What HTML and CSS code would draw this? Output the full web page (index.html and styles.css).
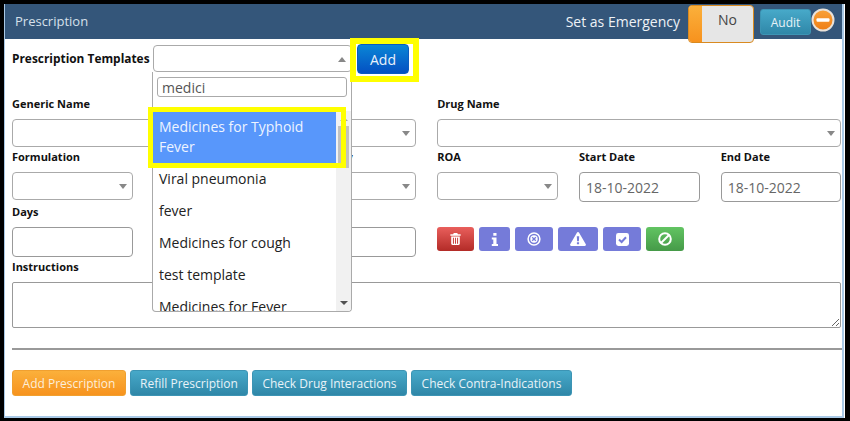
FILE: index.html
```html
<!DOCTYPE html>
<html lang="en">
<head>
<meta charset="utf-8">
<title>Prescription</title>
<link rel="stylesheet" href="styles.css">
</head>
<body>
<div class="frame">
  <div class="panel">
    <header class="head">
      <h1 class="title">Prescription</h1>
      <span class="emergency">Set as Emergency</span>
      <div class="toggle"><span class="toggle-knob"></span><span class="toggle-text">No</span></div>
      <button class="btn btn-info btn-audit">Audit</button>
      <svg class="minus" width="24" height="24" viewBox="0 0 24 24">
        <defs><linearGradient id="mg" x1="0" y1="0" x2="0" y2="1"><stop offset="0" stop-color="#f9a23a"/><stop offset="1" stop-color="#ee7d14"/></linearGradient></defs>
        <circle cx="12" cy="12" r="10.5" fill="url(#mg)" stroke="#e9e2da" stroke-width="2"/>
        <rect x="5.5" y="10.2" width="13" height="3.6" rx="1" fill="#fff"/>
      </svg>
    </header>
    <div class="form">
      <div class="template-row">
        <label class="template-label">Prescription Templates</label>
        <div class="select template-select"><i class="caret caret-up"></i></div>
        <button class="btn btn-add">Add</button>
      </div>
      <div class="fields">
        <div class="field span3"><label>Generic Name</label><div class="select"><i class="caret"></i></div></div>
        <div class="field span3"><label>Drug Name</label><div class="select"><i class="caret"></i></div></div>
        <div class="field"><label>Formulation</label><div class="select"><i class="caret"></i></div></div>
        <div class="field"><label></label><div class="select"><i class="caret"></i></div></div>
        <div class="field"><label>Frequency</label><div class="select"><i class="caret"></i></div></div>
        <div class="field"><label>ROA</label><div class="select"><i class="caret"></i></div></div>
        <div class="field"><label>Start Date</label><input class="input" type="text" value="18-10-2022"></div>
        <div class="field"><label>End Date</label><input class="input" type="text" value="18-10-2022"></div>
        <div class="field"><label>Days</label><input class="input" type="text"></div>
        <div class="field span2"><label></label><input class="input" type="text"></div>
        <div class="field span3 icon-field">
          <button class="icon-btn red w37"><svg width="11" height="12" viewBox="0 0 12 14"><path fill="#fff" fill-rule="evenodd" d="M4 0h4l.8 1.6H12v1.6H0V1.6h3.200zM1 4h10v8.600c0 .8-.6 1.400-1.400 1.400H2.400C1.600 14 1 13.400 1 12.600zM3 5.500v7h1.200v-7zM5.400 5.500v7h1.200v-7zM7.800 5.500v7H9v-7z"/></svg></button>
          <button class="icon-btn purple w31"><svg width="8" height="13" viewBox="0 0 8 13"><path fill="#fff" d="M2.300 0h3.200v2.800H2.300zM.8 4.400h4.700v6.600H7V13H.8v-2h1.500V6.400H.8z"/></svg></button>
          <button class="icon-btn purple w38"><svg width="14" height="14" viewBox="0 0 14 14"><circle cx="7" cy="7" r="5.900" fill="none" stroke="#fff" stroke-width="1.500"/><circle cx="7" cy="7" r="3.700" fill="#fff"/><path d="M5.200 5.200l3.600 3.600m0-3.600l-3.600 3.600" stroke="#757bd9" stroke-width="1.300"/></svg></button>
          <button class="icon-btn purple w40"><svg width="16" height="14" viewBox="0 0 16 14"><path fill="#fff" fill-rule="evenodd" d="M8 0c.5 0 .9.300 1.100.7l6.700 11.600c.4.800-.1 1.700-1 1.700H1.200c-.9 0-1.400-.9-1-1.700L6.900.7C7.100.3 7.500 0 8 0zM6.800 4.300l.3 5h1.800l.3-5zM6.900 10.300v2h2.200v-2z"/></svg></button>
          <button class="icon-btn purple w38"><svg width="13" height="13" viewBox="0 0 13 13"><rect width="13" height="13" rx="2.400" fill="#fff"/><path d="M3 6.500l2.600 2.500L10 4.300" fill="none" stroke="#757bd9" stroke-width="2"/></svg></button>
          <button class="icon-btn green w38"><svg width="14" height="14" viewBox="0 0 14 14"><circle cx="7" cy="7" r="5.800" fill="none" stroke="#fff" stroke-width="2"/><path d="M3 11L11 3" stroke="#fff" stroke-width="2"/></svg></button>
        </div>
        <div class="field span6"><label>Instructions</label><textarea class="textarea"></textarea></div>
      </div>
      <hr class="rule">
      <div class="actions">
        <button class="btn btn-orange w114">Add Prescription</button>
        <button class="btn btn-info w118">Refill Prescription</button>
        <button class="btn btn-info w155">Check Drug Interactions</button>
        <button class="btn btn-info w161">Check Contra-Indications</button>
      </div>
    </div>
  </div>
  <div class="dropdown">
    <input class="search" type="text" value="medici">
    <div class="list-wrap">
      <ul class="list">
        <li class="active">Medicines for Typhoid Fever</li>
        <li>Viral pneumonia</li>
        <li>fever</li>
        <li>Medicines for cough</li>
        <li>test template</li>
        <li>Medicines for Fever</li>
      </ul>
      <div class="scrollbar">
        <i class="sb-up"></i>
        <span class="thumb"></span>
        <i class="sb-down"></i>
      </div>
    </div>
  </div>
  <div class="mark mark-add"></div>
  <div class="mark mark-item"></div>
</div>
</body>
</html>
```

FILE: styles.css
```css
* { box-sizing: border-box; }
html, body { margin: 0; height: 100%; background: #000; overflow: hidden; }
body { font-family: "Open Sans", "Liberation Sans", sans-serif; color: #222; }
.frame { position: absolute; left: 4px; top: 4px; width: 841px; height: 414px; background: #fff; padding-right: 1px; }
.panel { height: 100%; border-left: 1px solid #a9c9e6; border-right: 2px solid #a9c9e6; border-bottom: 2px solid #a9c9e6; }
.head { height: 35px; background: #34567a; display: flex; align-items: flex-start; padding: 0 7px 0 10px; color: #fff; }
.title { margin: 0; font-size: 13px; font-weight: 400; line-height: 35px; color: #d6e0ea; flex: 1; }
.emergency { font-size: 14px; line-height: 36px; color: #eef2f6; margin-right: 8px; }
.toggle { width: 66px; height: 38px; margin-top: 1px; background: #e6e6e6; border: 1px solid #d98a20; border-radius: 4px; display: flex; position: relative; z-index: 2; }
.toggle-knob { width: 13px; background: linear-gradient(#fbb03b, #f7921e); border-radius: 3px 0 0 3px; }
.toggle-text { flex: 1; text-align: center; font-size: 14px; line-height: 28px; color: #444; }
.btn { font-family: inherit; border: 1px solid transparent; border-radius: 3px; color: #e8f3f8; cursor: pointer; padding: 0; }
.btn-info { background: linear-gradient(#47a9c9, #2f87a8); border-color: #3c94b4; }
.btn-orange { background: linear-gradient(#fbb03b, #f7931e); border-color: #f0a030; color: #fdeeda; }
.btn-audit { width: 51px; height: 26px; margin: 5px 0 0 6px; font-size: 12px; }
.minus { margin: 4px 0 0 0; }
.form { padding: 5px 0 0 7px; width: 838px; }
.template-row { display: flex; align-items: center; height: 30px; }
.template-label { font-size: 11.9px; font-weight: 700; color: #111; width: 141px; margin-bottom: 2px; }
.select { position: relative; height: 28px; background: #fff; border: 1px solid #aaa; border-radius: 4px; }
.template-select { width: 199px; height: 27px; margin-bottom: 1px; }
.caret { position: absolute; right: 5px; top: 11px; width: 0; height: 0; border-left: 4px solid transparent; border-right: 4px solid transparent; border-top: 5px solid #888; }
.caret-up { border-top: 0; border-bottom: 5px solid #888; }
.btn-add { width: 52px; height: 30px; margin-left: 5px; background: linear-gradient(#0a86d6, #0450c2); border-color: #0a5cc0; border-radius: 4px; color: #eaf2fb; font-size: 14px; }
.fields { display: grid; grid-template-columns: repeat(6, 1fr); gap: 3px 21px; margin-top: 23px; align-items: start; width: 829.4px; }
.field label { display: block; height: 14px; margin-bottom: 8px; font-size: 11px; line-height: 14px; font-weight: 700; color: #111; }
.span2 { grid-column: span 2; }
.span3 { grid-column: span 3; }
.span6 { grid-column: span 6; }
.input { display: block; width: 100%; height: 30px; border: 1px solid #999; border-radius: 4px; padding: 0 6px; font: 14px "Open Sans", sans-serif; color: #666; background: #fff; }
.textarea { display: block; width: 100%; height: 46px; border: 1px solid #999; border-radius: 2px; background: #fff; }
.icon-field { display: flex; gap: 5px; padding-top: 22px; }
.icon-btn { height: 24px; border: 0; border-radius: 3px; padding: 0; display: flex; align-items: center; justify-content: center; }
.icon-btn.purple { background: #757bd9; }
.icon-btn.red { background: linear-gradient(#e95f5c, #b32b27); }
.icon-btn.green { background: linear-gradient(#62c462, #459a48); }
.w37 { width: 37px; } .w31 { width: 31px; } .w38 { width: 38px; } .w40 { width: 40px; }
.rule { margin: 20px 0; height: 2px; border: 0; background: #999; width: 830px; }
.actions { display: flex; gap: 4px; }
.actions .btn { height: 26px; font-size: 12px; }
.w114 { width: 114px; } .w118 { width: 118px; } .w155 { width: 155px; } .w161 { width: 161px; }
.dropdown { position: absolute; left: 148px; top: 68px; width: 200px; height: 240px; background: #fff; border: 1px solid #aaa; border-top: 0; border-radius: 0 0 4px 4px; overflow: hidden; z-index: 3; }
.search { display: block; margin: 5px 0 0 4px; width: 190px; height: 20px; border: 1px solid #aaa; border-radius: 3px; padding: 0 4px; font: 14px "Open Sans", sans-serif; color: #555; }
.list-wrap { position: absolute; left: 0; right: 0; top: 39px; bottom: 0; overflow: hidden; display: flex; }
.list { list-style: none; margin: 0; padding: 0; width: 183px; font-size: 14px; line-height: 20px; color: #222; }
.list li { padding: 6px 6px; }
.list .active { background: #5897fb; color: #eef4ff; }
.scrollbar { position: absolute; left: 183px; top: -3px; bottom: 0; width: 15px; background: #f1f1f1; }
.thumb { position: absolute; left: 2px; top: 18px; width: 11px; height: 42px; background: #c1c1c1; }
.sb-up, .sb-down { position: absolute; left: 4px; width: 0; height: 0; border-left: 4px solid transparent; border-right: 4px solid transparent; }
.sb-up { top: 9px; border-bottom: 4px solid #a3a3a3; }
.sb-down { bottom: 6px; border-top: 4px solid #505050; }
.mark { position: absolute; border: 5px solid #ffff00; z-index: 4; pointer-events: none; }
.mark-add { left: 346px; top: 34px; width: 69px; height: 44px; border-width: 6px; }
.mark-item { left: 144px; top: 103px; width: 198px; height: 61px; }
```
